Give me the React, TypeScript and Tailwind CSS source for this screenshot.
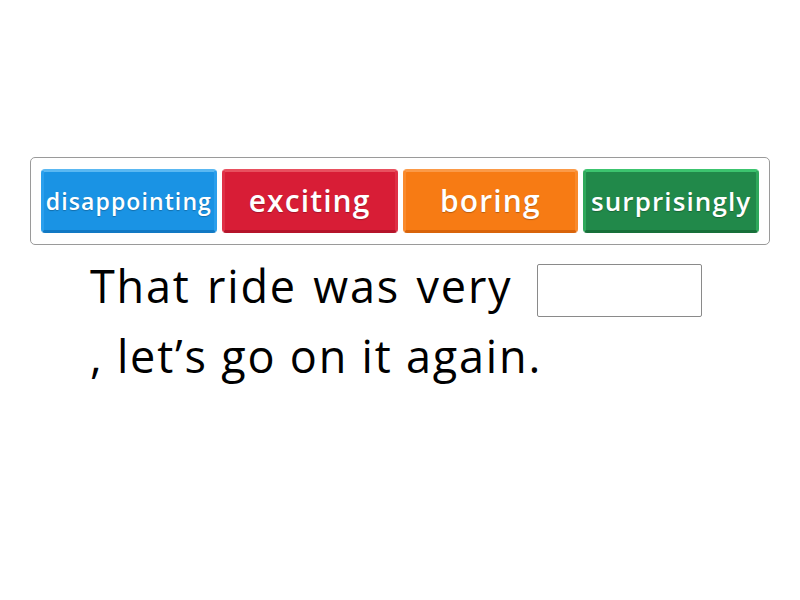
const words = [
  { text: 'disappointing', cls: 'bg-[#1a93e4] border-t-[#5ab8f2] border-x-[#2a9fec] border-b-[#1179c4] text-[23px]' },
  { text: 'exciting', cls: 'bg-[#d81d36] border-t-[#e8505f] border-x-[#df3046] border-b-[#b5142a] text-[30px]' },
  { text: 'boring', cls: 'bg-[#f77b14] border-t-[#fb9a48] border-x-[#f98a2c] border-b-[#d9640a] text-[30px]' },
  { text: 'surprisingly', cls: 'bg-[#21894a] border-t-[#3cc46f] border-x-[#2fa95c] border-b-[#17703a] text-[26px]' },
];

export default function App() {
  return (
    <div className="w-[800px] h-[600px] bg-white font-['Open_Sans',sans-serif] pt-[157px]">
      {/* WORD BANK */}
      <div className="mx-[30px] border border-[#9a9a9a] rounded-[5px] px-[10px] py-[11px] grid grid-cols-4 gap-[5px]">
        {words.map(w => (
          <div
            key={w.text}
            className={`h-[64px] rounded-[4px] border-[3px] flex items-center justify-center text-white font-semibold leading-none tracking-[1.1px] [text-shadow:0_1px_1px_rgba(0,0,0,0.25)] ${w.cls}`}
          >
            {w.text}
          </div>
        ))}
      </div>

      {/* SENTENCE */}
      <div className="mt-[6px] pl-[90px] pr-[60px] text-[45px] leading-[70px] tracking-[1.8px] text-black">
        <span className="[word-spacing:3px]">That ride was very</span>{' '}
        <span className="inline-block align-middle ml-[11px] w-[165px] h-[53px] border border-[#8a8a8a] rounded-[2px] bg-white"></span>
        <br />
        , let’s go on it again.
      </div>
    </div>
  );
}
